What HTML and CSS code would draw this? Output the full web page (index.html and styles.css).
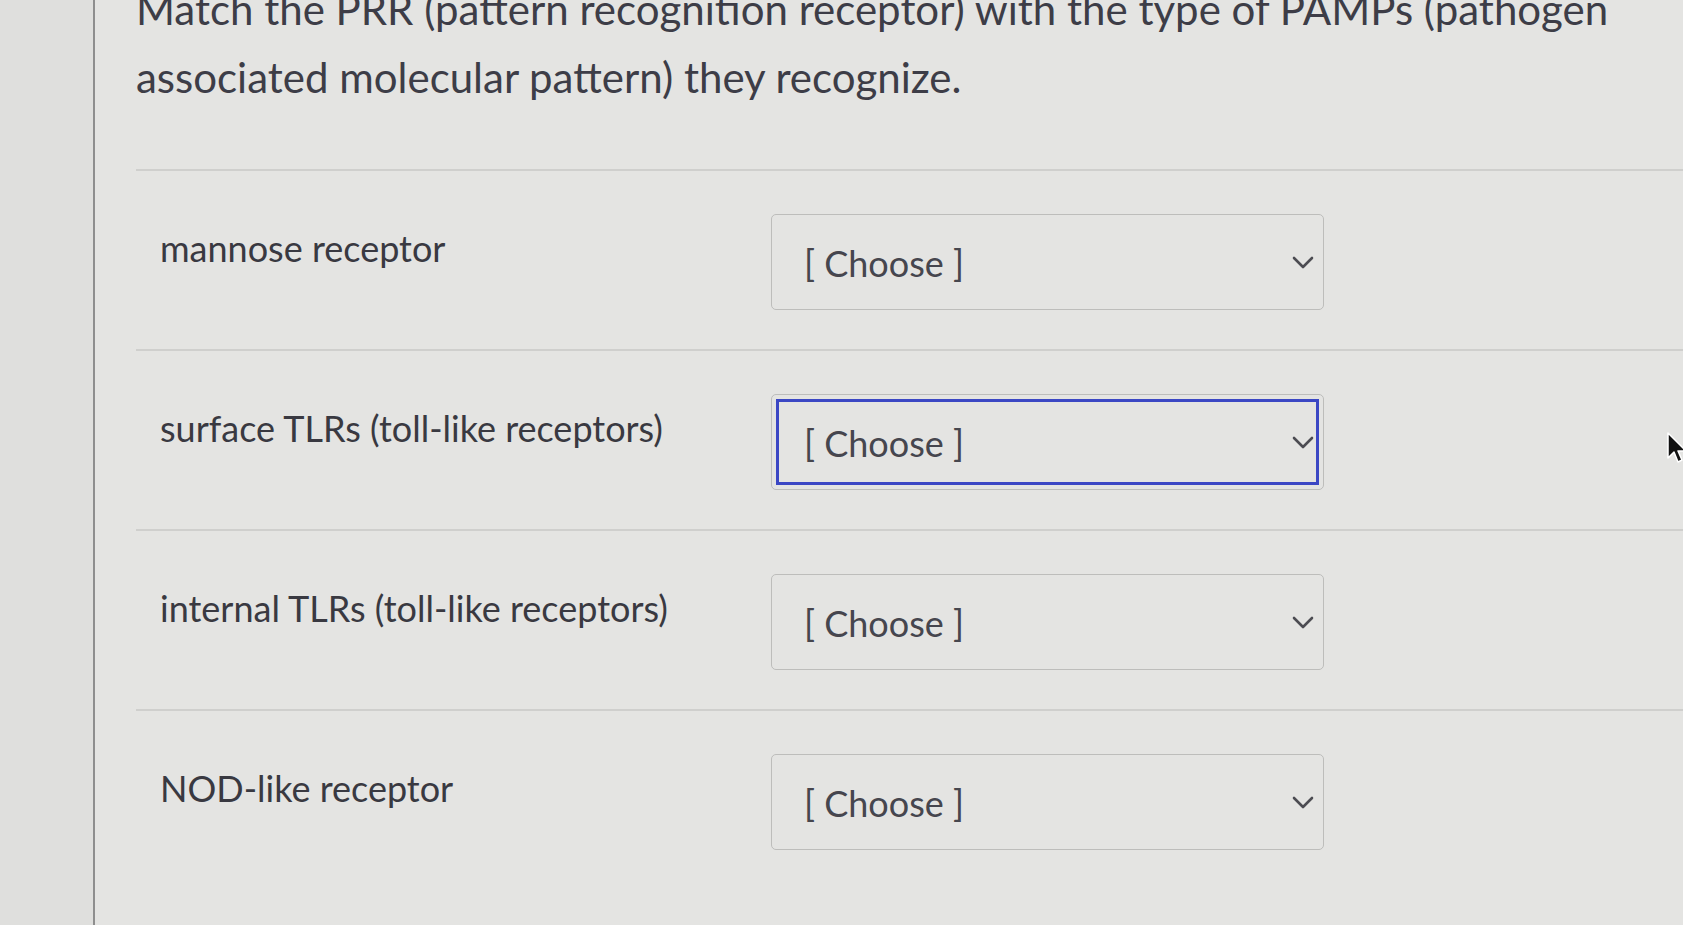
FILE: index.html
```html
<!DOCTYPE html>
<html lang="en">
<head>
<meta charset="utf-8">
<title>Matching question</title>
<link rel="stylesheet" href="styles.css">
</head>
<body>
<div class="page">
  <aside class="sidebar"></aside>
  <main class="main">
    <h1 class="title">Match the PRR (pattern recognition receptor) with the type of PAMPs (pathogen associated molecular pattern) they recognize.</h1>
    <div class="answers">
      <div class="row">
        <div class="row-label">mannose receptor</div>
        <div class="select"><span class="select-text">[ Choose ]</span><svg class="chev" width="22" height="13" viewBox="0 0 22 13"><polyline points="2,2 11,11 20,2" fill="none" stroke="#4c4c52" stroke-width="2.6" stroke-linecap="round" stroke-linejoin="round"/></svg></div>
      </div>
      <div class="row">
        <div class="row-label">surface TLRs (toll-like receptors)</div>
        <div class="select focused"><span class="select-text">[ Choose ]</span><svg class="chev" width="22" height="13" viewBox="0 0 22 13"><polyline points="2,2 11,11 20,2" fill="none" stroke="#4c4c52" stroke-width="2.6" stroke-linecap="round" stroke-linejoin="round"/></svg></div>
      </div>
      <div class="row">
        <div class="row-label">internal TLRs (toll-like receptors)</div>
        <div class="select"><span class="select-text">[ Choose ]</span><svg class="chev" width="22" height="13" viewBox="0 0 22 13"><polyline points="2,2 11,11 20,2" fill="none" stroke="#4c4c52" stroke-width="2.6" stroke-linecap="round" stroke-linejoin="round"/></svg></div>
      </div>
      <div class="row">
        <div class="row-label">NOD-like receptor</div>
        <div class="select"><span class="select-text">[ Choose ]</span><svg class="chev" width="22" height="13" viewBox="0 0 22 13"><polyline points="2,2 11,11 20,2" fill="none" stroke="#4c4c52" stroke-width="2.6" stroke-linecap="round" stroke-linejoin="round"/></svg></div>
      </div>
    </div>
  </main>
  <svg class="cursor" width="22" height="34" viewBox="0 0 22 34"><path d="M1 1 L1 26 L7 20 L11 30 L15 28 L11 19 L19 19 Z" fill="#111" stroke="#fff" stroke-width="1.5" stroke-linejoin="round"/></svg>
</div>
</body>
</html>
```
FILE: styles.css
```css
html, body {
  margin: 0;
  padding: 0;
  height: 100%;
  overflow: hidden;
}
body {
  background: #e4e4e2;
  font-family: Lato, "Open Sans", sans-serif;
  color: #3b3b44;
}
.page {
  position: relative;
  display: flex;
  min-height: 925px;
}
.sidebar {
  width: 93px;
  flex: 0 0 93px;
  background: #dfdfdd;
  border-right: 2px solid #8e8e8e;
}
.main {
  flex: 1;
  padding-left: 41px;
}
.title {
  margin: -25px 0 0;
  width: 1510px;
  font-size: 42px;
  line-height: 68px;
  font-weight: 400;
  color: #3d3d47;
}
.answers {
  margin-top: 58px;
}
.row {
  display: flex;
  align-items: flex-start;
  border-top: 2px solid #cfcfcd;
  padding: 43px 0 39px;
}
.row-label {
  width: 611px;
  flex: 0 0 611px;
  padding-left: 24px;
  padding-top: 14px;
  font-size: 36px;
  line-height: 40px;
  color: #393941;
}
.select {
  box-sizing: border-box;
  width: 553px;
  height: 96px;
  border: 1px solid #bdbdbb;
  border-radius: 5px;
  display: flex;
  align-items: center;
  justify-content: space-between;
  padding: 0 9px 0 32px;
  font-size: 36px;
  color: #46464e;
}
.select-text {
  padding-top: 2px;
}
.select.focused {
  outline: 3px solid #3b47c4;
  outline-offset: -8px;
}
.chev {
  display: block;
}
.cursor {
  position: absolute;
  left: 1667px;
  top: 432px;
}
```
